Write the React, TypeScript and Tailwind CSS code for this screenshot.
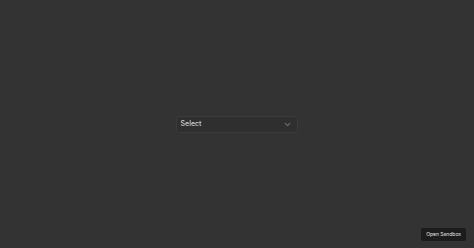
import { ChevronDown } from "lucide-react";

export default function App() {
  return (
    <div className="relative h-[248px] w-full bg-[#333333] font-['Inter',sans-serif]">
      <div className="flex h-full items-center justify-center pt-[1px]">
        <button className="ml-[-1px] flex h-[17px] w-[122px] items-center justify-between rounded-[3px] border border-[#3b3b3b] bg-[#2f2f2f] pl-[4px] pr-[5px] text-[7px] font-medium text-[#cfcfcf]">
          <span>Select</span>
          <ChevronDown size={9} strokeWidth={3} className="text-[#6e6684]" />
        </button>
      </div>
      <button className="absolute bottom-[7px] right-[8px] flex h-[13px] items-center rounded-[2px] bg-[#1c1c1c] px-[5px] text-[5px] text-[#e5e5e5]">
        Open Sandbox
      </button>
    </div>
  );
}
